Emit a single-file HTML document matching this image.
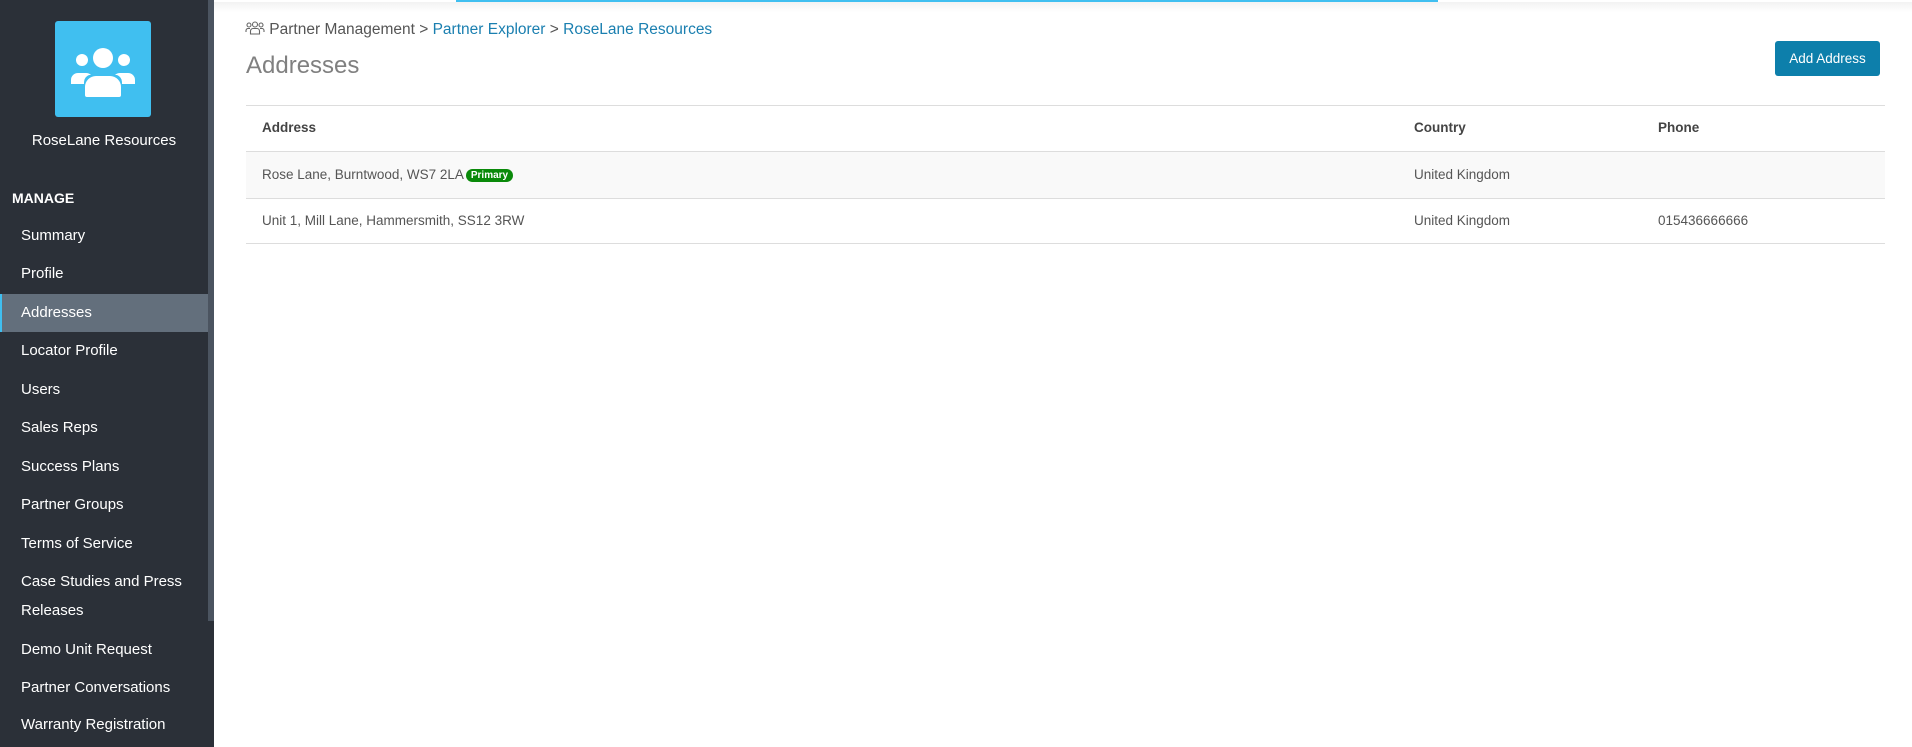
<!DOCTYPE html>
<html><head><meta charset="utf-8"><style>
*{margin:0;padding:0;box-sizing:border-box}
body{width:1912px;height:747px;overflow:hidden;background:#fff;font-family:"Liberation Sans",sans-serif;position:relative}
.side{position:absolute;left:0;top:0;width:214px;height:747px;background:#2b3038}
.sb{position:absolute;left:208px;top:0;width:6px;height:621px;background:#4b5460}
.logo{position:absolute;left:55px;top:21px;width:96px;height:96px;background:#40bff0;border-radius:3px}
.name{position:absolute;left:0;width:208px;top:132px;text-align:center;color:#fff;font-size:15px}
.mg{position:absolute;left:12px;top:190px;color:#fff;font-weight:bold;font-size:14px}
.it{position:absolute;left:0;width:208px;height:38px;line-height:38px;padding-left:21px;color:#fff;font-size:15px}
.act{background:#636f7c;border-left:2px solid #40bff0;padding-left:19px}
.bc{position:absolute;left:245px;top:21px;font-size:15.5px;color:#555}
.bc a{color:#1a7fb0;text-decoration:none}
h1{position:absolute;left:246px;top:52px;font-size:24px;font-weight:normal;color:#808080}
.btn{position:absolute;left:1775px;top:41px;width:105px;height:35px;background:#0d7fab;border-radius:3px;color:#fff;font-size:13.5px;text-align:center;line-height:35px}
.line{position:absolute;left:246px;width:1639px;height:1px;background:#ddd}
.t{position:absolute;font-size:13.5px;color:#555}
.h{font-weight:bold;color:#444}
.pr{display:inline-block;background:#0a8a0a;color:#fff;font-size:10px;font-weight:bold;border-radius:8px;padding:1px 5px;margin-left:2px;vertical-align:1px}
</style></head><body>
<div style="position:absolute;left:456px;top:0;width:982px;height:2px;background:#40bff0"></div>
<div style="position:absolute;left:214px;top:2px;width:1698px;height:10px;background:linear-gradient(#f2f2f2,#fff)"></div>
<div class="side"></div><div class="sb"></div>
<div class="logo"><svg width="96" height="96" viewBox="0 0 96 96"><g fill="#fff"><circle cx="48" cy="37" r="10"/><circle cx="27" cy="39" r="6"/><circle cx="69" cy="39" r="6"/><path d="M16 59a7 7 0 0 1 7-7h8a7 7 0 0 1 5 2h-2a8 8 0 0 0-5 7v2h-13z"/><path d="M80 59a7 7 0 0 0-7-7h-8a7 7 0 0 0-5 2h2a8 8 0 0 1 5 7v2h13z"/><path d="M30 66a11 11 0 0 1 11-11h14a11 11 0 0 1 11 11v8a2 2 0 0 1-2 2h-32a2 2 0 0 1-2-2z"/></g></svg></div>
<div class="name">RoseLane Resources</div>
<div class="mg">MANAGE</div>
<div class="it" style="top:217px">Summary</div>
<div class="it" style="top:255px">Profile</div>
<div class="it act" style="top:294px">Addresses</div>
<div class="it" style="top:332px">Locator Profile</div>
<div class="it" style="top:371px">Users</div>
<div class="it" style="top:409px">Sales Reps</div>
<div class="it" style="top:448px">Success Plans</div>
<div class="it" style="top:486px">Partner Groups</div>
<div class="it" style="top:525px">Terms of Service</div>
<div class="it" style="top:567px;line-height:29px;height:auto">Case Studies and Press<br>Releases</div>
<div class="it" style="top:631px">Demo Unit Request</div>
<div class="it" style="top:669px">Partner Conversations</div>
<div class="it" style="top:706px">Warranty Registration</div>
<div class="bc"><svg width="20" height="14" viewBox="0 0 20 14" style="vertical-align:-1px" fill="none" stroke="#666" stroke-width="1.1"><circle cx="10" cy="3.5" r="2.5"/><circle cx="4" cy="4" r="2"/><circle cx="16" cy="4" r="2"/><path d="M5.5 13v-3a2.5 2.5 0 0 1 2.5-2.5h4a2.5 2.5 0 0 1 2.5 2.5v3z"/><path d="M1 11v-1.5a2 2 0 0 1 2-2h2M19 11v-1.5a2 2 0 0 0-2-2h-2"/></svg> Partner Management &gt; <a>Partner Explorer</a> &gt; <a>RoseLane Resources</a></div>
<h1>Addresses</h1>
<div class="btn">Add Address</div>
<div class="line" style="top:105px"></div>
<div style="position:absolute;left:246px;top:152px;width:1639px;height:46px;background:#f9f9f9"></div>
<div class="line" style="top:151px"></div>
<div class="line" style="top:198px"></div>
<div class="line" style="top:243px"></div>
<div class="t h" style="left:262px;top:120px">Address</div>
<div class="t h" style="left:1414px;top:120px">Country</div>
<div class="t h" style="left:1658px;top:120px">Phone</div>
<div class="t" style="left:262px;top:167px">Rose Lane, Burntwood, WS7 2LA<span class="pr">Primary</span></div>
<div class="t" style="left:1414px;top:167px">United Kingdom</div>
<div class="t" style="left:262px;top:213px">Unit 1, Mill Lane, Hammersmith, SS12 3RW</div>
<div class="t" style="left:1414px;top:213px">United Kingdom</div>
<div class="t" style="left:1658px;top:213px">015436666666</div>
</body></html>
